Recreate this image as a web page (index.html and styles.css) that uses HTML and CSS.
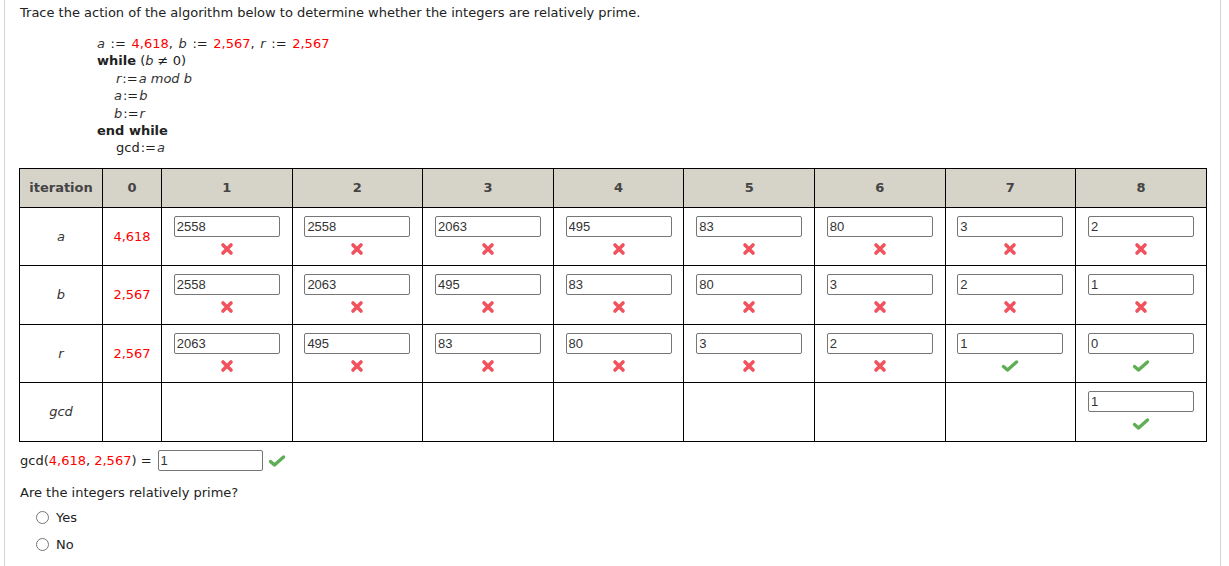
FILE: index.html
```html
<!DOCTYPE html>
<html>
<head>
<meta charset="utf-8">
<link rel="stylesheet" href="styles.css">
</head>
<body>
<div class="page">
  <p class="intro">Trace the action of the algorithm below to determine whether the integers are relatively prime.</p>
  <div class="algo">
    <div class="line first"><i>a</i> := <span class="red">4,618</span>, <i>b</i> := <span class="red">2,567</span>, <i>r</i> := <span class="red">2,567</span></div>
    <div class="line"><b>while</b> (<i>b</i> ≠ 0)</div>
    <div class="line ind1"><i>r</i><span class="op">:=</span><i>a</i> <i>mod</i> <i>b</i></div>
    <div class="line ind2"><i>a</i><span class="op">:=</span><i>b</i></div>
    <div class="line ind2"><i>b</i><span class="op">:=</span><i>r</i></div>
    <div class="line"><b>end while</b></div>
    <div class="line ind1">gcd<span class="op">:=</span><i>a</i></div>
  </div>

  <table class="trace">
    <colgroup>
      <col class="c-label"><col class="c-zero">
      <col class="c-it"><col class="c-it"><col class="c-it"><col class="c-it"><col class="c-it"><col class="c-it"><col class="c-it"><col class="c-it">
    </colgroup>
    <thead>
      <tr><th>iteration</th><th>0</th><th>1</th><th>2</th><th>3</th><th>4</th><th>5</th><th>6</th><th>7</th><th>8</th></tr>
    </thead>
    <tbody>
      <tr>
        <td class="var"><i>a</i></td><td class="red">4,618</td>
        <td><div class="ans"><input class="box" value="2558"><svg class="x" viewBox="0 0 14 14"><path d="M3 3L11 11M11 3L3 11"/></svg></div></td>
        <td><div class="ans"><input class="box" value="2558"><svg class="x" viewBox="0 0 14 14"><path d="M3 3L11 11M11 3L3 11"/></svg></div></td>
        <td><div class="ans"><input class="box" value="2063"><svg class="x" viewBox="0 0 14 14"><path d="M3 3L11 11M11 3L3 11"/></svg></div></td>
        <td><div class="ans"><input class="box" value="495"><svg class="x" viewBox="0 0 14 14"><path d="M3 3L11 11M11 3L3 11"/></svg></div></td>
        <td><div class="ans"><input class="box" value="83"><svg class="x" viewBox="0 0 14 14"><path d="M3 3L11 11M11 3L3 11"/></svg></div></td>
        <td><div class="ans"><input class="box" value="80"><svg class="x" viewBox="0 0 14 14"><path d="M3 3L11 11M11 3L3 11"/></svg></div></td>
        <td><div class="ans"><input class="box" value="3"><svg class="x" viewBox="0 0 14 14"><path d="M3 3L11 11M11 3L3 11"/></svg></div></td>
        <td><div class="ans"><input class="box" value="2"><svg class="x" viewBox="0 0 14 14"><path d="M3 3L11 11M11 3L3 11"/></svg></div></td>
      </tr>
      <tr>
        <td class="var"><i>b</i></td><td class="red">2,567</td>
        <td><div class="ans"><input class="box" value="2558"><svg class="x" viewBox="0 0 14 14"><path d="M3 3L11 11M11 3L3 11"/></svg></div></td>
        <td><div class="ans"><input class="box" value="2063"><svg class="x" viewBox="0 0 14 14"><path d="M3 3L11 11M11 3L3 11"/></svg></div></td>
        <td><div class="ans"><input class="box" value="495"><svg class="x" viewBox="0 0 14 14"><path d="M3 3L11 11M11 3L3 11"/></svg></div></td>
        <td><div class="ans"><input class="box" value="83"><svg class="x" viewBox="0 0 14 14"><path d="M3 3L11 11M11 3L3 11"/></svg></div></td>
        <td><div class="ans"><input class="box" value="80"><svg class="x" viewBox="0 0 14 14"><path d="M3 3L11 11M11 3L3 11"/></svg></div></td>
        <td><div class="ans"><input class="box" value="3"><svg class="x" viewBox="0 0 14 14"><path d="M3 3L11 11M11 3L3 11"/></svg></div></td>
        <td><div class="ans"><input class="box" value="2"><svg class="x" viewBox="0 0 14 14"><path d="M3 3L11 11M11 3L3 11"/></svg></div></td>
        <td><div class="ans"><input class="box" value="1"><svg class="x" viewBox="0 0 14 14"><path d="M3 3L11 11M11 3L3 11"/></svg></div></td>
      </tr>
      <tr>
        <td class="var"><i>r</i></td><td class="red">2,567</td>
        <td><div class="ans"><input class="box" value="2063"><svg class="x" viewBox="0 0 14 14"><path d="M3 3L11 11M11 3L3 11"/></svg></div></td>
        <td><div class="ans"><input class="box" value="495"><svg class="x" viewBox="0 0 14 14"><path d="M3 3L11 11M11 3L3 11"/></svg></div></td>
        <td><div class="ans"><input class="box" value="83"><svg class="x" viewBox="0 0 14 14"><path d="M3 3L11 11M11 3L3 11"/></svg></div></td>
        <td><div class="ans"><input class="box" value="80"><svg class="x" viewBox="0 0 14 14"><path d="M3 3L11 11M11 3L3 11"/></svg></div></td>
        <td><div class="ans"><input class="box" value="3"><svg class="x" viewBox="0 0 14 14"><path d="M3 3L11 11M11 3L3 11"/></svg></div></td>
        <td><div class="ans"><input class="box" value="2"><svg class="x" viewBox="0 0 14 14"><path d="M3 3L11 11M11 3L3 11"/></svg></div></td>
        <td><div class="ans"><input class="box" value="1"><svg class="ok" viewBox="0 0 18 14"><path d="M2.5 7.5L6.5 11L15.5 3"/></svg></div></td>
        <td><div class="ans"><input class="box" value="0"><svg class="ok" viewBox="0 0 18 14"><path d="M2.5 7.5L6.5 11L15.5 3"/></svg></div></td>
      </tr>
      <tr>
        <td class="var"><i>gcd</i></td><td></td>
        <td></td><td></td><td></td><td></td><td></td><td></td><td></td>
        <td><div class="ans"><input class="box" value="1"><svg class="ok" viewBox="0 0 18 14"><path d="M2.5 7.5L6.5 11L15.5 3"/></svg></div></td>
      </tr>
    </tbody>
  </table>

  <div class="result">
    <span>gcd(<span class="red">4,618</span>, <span class="red">2,567</span>) = </span>
    <input class="box" value="1">
    <svg class="ok" viewBox="0 0 18 14"><path d="M2.5 7.5L6.5 11L15.5 3"/></svg>
  </div>

  <p class="question">Are the integers relatively prime?</p>
  <div class="options">
    <label class="opt"><input type="radio" name="rp"><span>Yes</span></label>
    <label class="opt"><input type="radio" name="rp"><span>No</span></label>
  </div>
</div>
</body>
</html>
```

FILE: styles.css
```css
html, body {
  margin: 0;
  padding: 0;
  background: #fff;
}
body {
  font-family: "DejaVu Sans", Verdana, sans-serif;
  font-size: 13px;
  color: #222;
}
.page {
  margin-left: 4px;
  width: 1217px;
  min-height: 566px;
  box-sizing: border-box;
  border-left: 1px solid #d4d4d4;
  border-right: 1px solid #d4d4d4;
  padding: 5px 0 0 15px;
}
.intro {
  margin: 0;
  line-height: 16px;
}
.red { color: #f00; }
i { color: #333; }
.algo {
  margin: 14px 0 0 77px;
}
.line {
  line-height: 17.4px;
  height: 17.4px;
}
.line.first { word-spacing: 1.5px; }
.line b { color: #222; }
.op { margin: 0 1px; }
.ind1 { padding-left: 19px; }
.ind2 { padding-left: 17px; }

.trace {
  margin: 11px 0 0 -1px;
  border-collapse: collapse;
  table-layout: fixed;
  width: 1187px;
}
.c-label { width: 83px; }
.c-zero { width: 59px; }
.c-it { width: 130.6px; }
.trace th, .trace td {
  border: 1px solid #000;
  text-align: center;
  padding: 0;
}
.trace th {
  background: #d6d3c9;
  height: 38px;
  font-weight: bold;
  color: #444;
}
.trace td {
  height: 57.5px;
  vertical-align: middle;
}
.trace td.var { color: #333; }
.ans {
  display: flex;
  flex-direction: column;
  align-items: center;
  gap: 5px;
  padding-bottom: 1px;
}
.box {
  width: 106px;
  height: 21px;
  box-sizing: border-box;
  border: 1px solid #767676;
  border-radius: 2px;
  padding: 0 2px;
  margin: 0;
  font-family: "Liberation Sans", Arial, sans-serif;
  font-size: 13px;
  color: #333;
  background: #fff;
}
.x {
  width: 14px;
  height: 14px;
  display: block;
}
.x path {
  stroke: #f2525e;
  stroke-width: 3.6;
  stroke-linecap: round;
  fill: none;
}
.ok {
  width: 18px;
  height: 14px;
  display: block;
}
.ok path {
  stroke: #5fae55;
  stroke-width: 3.4;
  stroke-linecap: round;
  stroke-linejoin: round;
  fill: none;
}
.result {
  display: flex;
  align-items: center;
  margin-top: 8px;
  height: 21px;
}
.result .box {
  width: 105px;
  margin-left: 6px;
}
.result .ok {
  margin-left: 5px;
  margin-top: 2px;
}
.question {
  margin: 14px 0 0 0;
  line-height: 16px;
}
.options {
  margin-top: 9px;
  display: flex;
  flex-direction: column;
  gap: 11px;
}
.opt {
  display: flex;
  align-items: center;
  height: 16px;
  padding-left: 16px;
}
.opt input {
  margin: 0 7px 0 0;
  width: 13px;
  height: 13px;
}
```
